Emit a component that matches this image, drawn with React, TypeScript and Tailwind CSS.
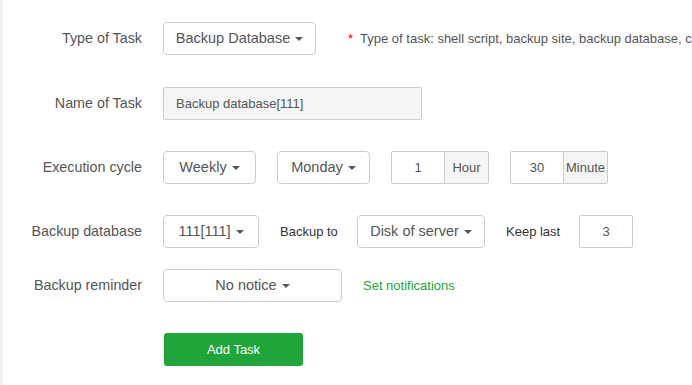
const Caret = () => (
  <span className="ml-[5px] inline-block h-0 w-0 border-x-4 border-t-4 border-x-transparent border-t-[#555] align-middle" />
);

const Select = ({ label, width }: { label: string; width: string }) => (
  <button
    className={`flex h-[33px] ${width} shrink-0 items-center justify-center rounded-[4px] border border-[#ccc] bg-white text-[14.5px] text-[#555]`}
  >
    {label}
    <Caret />
  </button>
);

const Label = ({ children }: { children: string }) => (
  <div className="w-[139px] shrink-0 text-right text-[14.3px] text-[#555]">{children}</div>
);

const Row = ({ children, className = "" }: { children: React.ReactNode; className?: string }) => (
  <div className={`flex h-[33px] items-center gap-[21px] ${className}`}>{children}</div>
);

const InputGroup = ({ value, unit }: { value: string; unit: string }) => (
  <div className="flex h-[33px] shrink-0">
    <div className="flex w-[54px] items-center justify-center rounded-l-[2px] border border-[#ccc] text-[13px] text-[#555]">
      {value}
    </div>
    <div className="-ml-px flex w-[45px] items-center justify-center rounded-r-[2px] border border-[#ccc] bg-[#f5f5f5] text-[13px] text-[#555]">
      {unit}
    </div>
  </div>
);

export default function App() {
  return (
    <div
      className="flex h-[385px] w-[692px] overflow-hidden bg-white"
      style={{ fontFamily: '"Liberation Sans", Arial, sans-serif' }}
    >
      <div className="w-[3px] shrink-0 bg-[#f2f2f2]" />
      <div className="min-w-0 flex-1 overflow-hidden pt-[22px] whitespace-nowrap">
        <Row>
          <Label>Type of Task</Label>
          <Select label="Backup Database" width="w-[153px]" />
          <div className="ml-[11px] flex min-w-0 items-center overflow-hidden text-[13px] text-[#555]">
            <span className="mr-[7px] text-[#ef0000]">*</span>
            <span className="overflow-hidden">
              Type of task: shell script, backup site, backup database, cut log, release memory, access URL
            </span>
          </div>
        </Row>

        <Row className="mt-[32px]">
          <Label>Name of Task</Label>
          <div className="flex h-[33px] w-[259px] items-center rounded-[2px] border border-[#ccc] bg-[#f5f5f5] px-[12px] text-[13px] text-[#555]">
            Backup database[111]
          </div>
        </Row>

        <Row className="mt-[31px]">
          <Label>Execution cycle</Label>
          <Select label="Weekly" width="w-[93px]" />
          <Select label="Monday" width="w-[93px]" />
          <InputGroup value="1" unit="Hour" />
          <InputGroup value="30" unit="Minute" />
        </Row>

        <Row className="mt-[31px]">
          <Label>Backup database</Label>
          <Select label="111[111]" width="w-[96px]" />
          <span className="w-[56px] shrink-0 text-[13px] text-[#333]">Backup to</span>
          <Select label="Disk of server" width="w-[128px]" />
          <span className="w-[52px] shrink-0 text-[13px] text-[#333]">Keep last</span>
          <div className="flex h-[33px] w-[54px] items-center justify-center rounded-[2px] border border-[#ccc] text-[13px] text-[#555]">
            3
          </div>
        </Row>

        <Row className="mt-[21px]">
          <Label>Backup reminder</Label>
          <Select label="No notice" width="w-[179px]" />
          <span className="text-[13px] text-[#20a53a]">Set notifications</span>
        </Row>

        <Row className="mt-[31px]">
          <div className="w-[140px] shrink-0" />
          <button className="h-[33px] w-[139px] rounded-[3px] bg-[#20a53a] text-[13px] text-white">
            Add Task
          </button>
        </Row>
      </div>
    </div>
  );
}
